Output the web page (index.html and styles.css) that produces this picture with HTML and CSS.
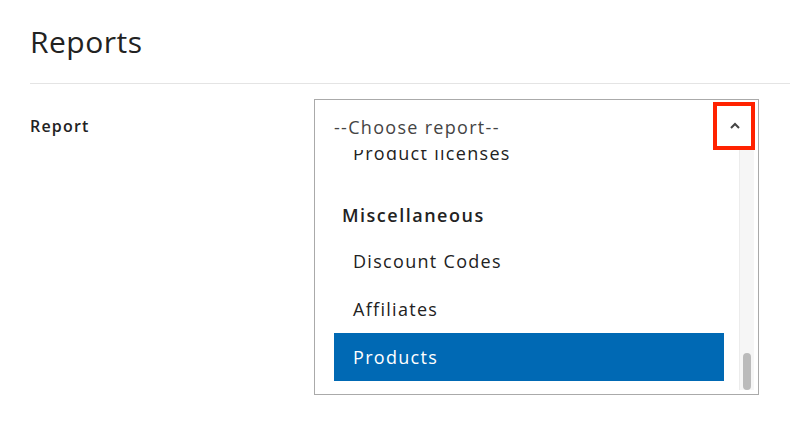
FILE: index.html
```html
<!DOCTYPE html>
<html>
<head>
<meta charset="utf-8">
<link rel="stylesheet" href="styles.css">
</head>
<body>
<div class="page">
  <h1 class="title">Reports</h1>
  <div class="rule"></div>
  <div class="field">
    <div class="label">Report</div>
    <div class="select">
      <div class="select-head">
        <span class="placeholder">--Choose report--</span>
        <span class="toggle">
          <svg width="12" height="8" viewBox="0 0 12 8"><path d="M2 6 L6 2 L10 6" fill="none" stroke="#444" stroke-width="2"/></svg>
        </span>
      </div>
      <div class="select-body">
        <div class="options">
          <div class="option">Product licenses</div>
          <div class="group">Miscellaneous</div>
          <div class="option">Discount Codes</div>
          <div class="option">Affiliates</div>
          <div class="option selected">Products</div>
        </div>
        <div class="scrollbar"><div class="thumb"></div></div>
      </div>
      <div class="highlight"></div>
    </div>
  </div>
</div>
</body>
</html>
```
FILE: styles.css
```css
html, body { margin: 0; padding: 0; background: #fff; }
body { font-family: "Open Sans", "Liberation Sans", sans-serif; color: #222; }
.page { padding: 22px 0 0 30px; }
.title { margin: 0; font-size: 30px; font-weight: 400; line-height: 40px; color: #222; letter-spacing: 0.5px; }
.rule { margin-top: 21px; height: 1px; background: #e4e4e4; }
.field { display: flex; margin-top: 15px; }
.label { width: 284px; font-weight: 600; font-size: 16px; padding-top: 16px; color: #222; letter-spacing: 1.2px; }
.select { position: relative; width: 443px; height: 294px; border: 1px solid #aaa; display: flex; flex-direction: column; }
.select-head { height: 50px; flex: none; display: flex; justify-content: space-between; padding: 0 0 0 19px; }
.placeholder { font-size: 18px; color: #444; letter-spacing: 1.3px; padding-top: 15px; line-height: 24px; }
.toggle { width: 42px; display: flex; justify-content: center; align-items: center; height: 48px; padding-top: 4px; box-sizing: border-box; padding-right: 4px; }
.select-body { flex: 1; display: flex; overflow: hidden; padding-left: 19px; }
.options { flex: 1; margin-top: -21px; margin-right: 15px; }
.option { height: 48px; display: flex; align-items: center; padding-left: 19px; font-size: 18px; letter-spacing: 1.3px; color: #222; }
.option.selected { background: #0069b4; color: #fff; }
.group { height: 44px; margin-top: 16px; display: flex; align-items: center; padding-left: 8px; font-size: 18px; font-weight: 600; letter-spacing: 1.5px; color: #222; }
.scrollbar { width: 14px; margin-right: 4px; margin-bottom: 4px; background: #f6f6f6; border-left: 1px solid #ececec; position: relative; }
.thumb { position: absolute; left: 3px; bottom: 0; width: 8px; height: 37px; border-radius: 4px; background: #bbb; }
.highlight { position: absolute; top: 2px; right: 3px; width: 34px; height: 40px; border: 4px solid #ff2200; }
```
